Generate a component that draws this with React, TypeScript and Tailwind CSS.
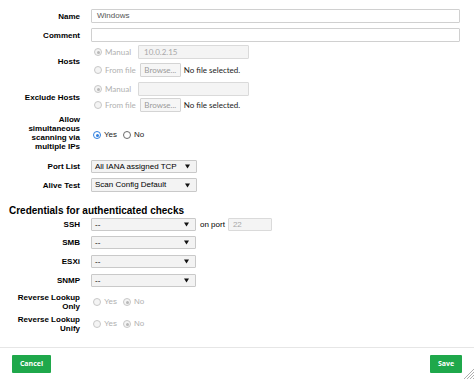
import type { ReactNode } from "react";

type RadioState = "on" | "off";

function Radio({ state, disabled }: { state: RadioState; disabled?: boolean }) {
  const ring = disabled
    ? "border-[#c8c8c8] bg-[#f4f4f4]"
    : state === "on"
      ? "border-[#2f7fe0] bg-white"
      : "border-[#6b6b6b] bg-white";
  const dot = disabled ? "bg-[#b8b8b8]" : "bg-[#2f7fe0]";
  return (
    <span className={`flex h-[8px] w-[8px] shrink-0 items-center justify-center rounded-full border ${ring}`}>
      {state === "on" && <span className={`h-[3px] w-[3px] rounded-full ${dot}`} />}
    </span>
  );
}

function Label({ children, className = "" }: { children: ReactNode; className?: string }) {
  return (
    <div className={`w-[80px] shrink-0 text-right font-bold leading-[9px] ${className}`}>{children}</div>
  );
}

function Row({ label, children, className = "" }: { label: ReactNode; children: ReactNode; className?: string }) {
  return (
    <div className={`flex items-center ${className}`}>
      <Label>{label}</Label>
      <div className="ml-[11px] flex items-center">{children}</div>
    </div>
  );
}

function Select({ value, width = "w-[106px]" }: { value: string; width?: string }) {
  return (
    <div
      className={`flex h-full ${width} items-center justify-between rounded-[1px] border border-[#c9c9c9] bg-[#f3f3f3] pl-[3px] pr-[6px]`}
    >
      <span>{value}</span>
      <svg width="5" height="5" viewBox="0 0 5 5">
        <path d="M0 0.5 L5 0.5 L2.5 4.5 Z" fill="#111" />
      </svg>
    </div>
  );
}

function FileRow() {
  return (
    <div className="flex h-[14px] items-center font-['Lato','Open_Sans',sans-serif]">
      <span className="ml-[3px]">
        <Radio state="off" disabled />
      </span>
      <span className="ml-[3px] text-[#b0b0b0]">From file</span>
      <span className="ml-[4px] flex h-[14px] w-[41px] items-center justify-center rounded-[1px] border border-[#d4d4d4] bg-[#f6f6f6] text-[#9a9a9a]">
        Browse...
      </span>
      <span className="ml-[3px] text-[#222]">No file selected.</span>
    </div>
  );
}

function ManualRow({ value }: { value: string }) {
  return (
    <div className="flex h-[14px] items-center font-['Lato','Open_Sans',sans-serif]">
      <span className="ml-[3px]">
        <Radio state="on" disabled />
      </span>
      <span className="ml-[3px] w-[33px] text-[#b0b0b0]">Manual</span>
      <span className="flex h-[14px] w-[111px] items-center rounded-[1px] border border-[#dadada] bg-[#f4f4f4] pl-[5px] text-[#a8a8a8]">
        {value}
      </span>
    </div>
  );
}

function YesNo({ yes, disabled }: { yes: boolean; disabled?: boolean }) {
  const txt = disabled ? "text-[#b0b0b0]" : "text-[#222]";
  return (
    <div className="flex items-center">
      <span className="ml-[2px]">
        <Radio state={yes ? "on" : "off"} disabled={disabled} />
      </span>
      <span className={`ml-[3px] ${txt}`}>Yes</span>
      <span className="ml-[6px]">
        <Radio state={yes ? "off" : "on"} disabled={disabled} />
      </span>
      <span className={`ml-[3px] ${txt}`}>No</span>
    </div>
  );
}

export default function App() {
  return (
    <div className="relative h-[379px] w-[474px] overflow-hidden bg-white font-['Liberation_Sans',Arial,sans-serif] text-[8px] text-black">
      <div className="pt-[9px]">
        <Row label="Name" className="h-[14px]">
          <div className="flex h-[14px] w-[369px] items-center rounded-[1px] border border-[#d0d0d0] pl-[5px] text-[#555]">
            Windows
          </div>
        </Row>
        <Row label="Comment" className="mt-[5px] h-[14px]">
          <div className="h-[14px] w-[369px] rounded-[1px] border border-[#d0d0d0]" />
        </Row>

        <div className="mt-[3px] flex items-center">
          <Label>Hosts</Label>
          <div className="ml-[11px] flex flex-col gap-[4px]">
            <ManualRow value="10.0.2.15" />
            <FileRow />
          </div>
        </div>

        <div className="mt-[5px] flex items-center">
          <Label>Exclude Hosts</Label>
          <div className="ml-[11px] flex flex-col gap-[2px]">
            <ManualRow value="" />
            <FileRow />
          </div>
        </div>

        <div className="mt-[3px] flex items-center">
          <Label>
            Allow
            <br />
            simultaneous
            <br />
            scanning via
            <br />
            multiple IPs
          </Label>
          <div className="ml-[11px] mt-[4px]">
            <YesNo yes />
          </div>
        </div>

        <Row label="Port List" className="mt-[9px] h-[13px]">
          <div className="h-[13px]">
            <Select value="All IANA assigned TCP" />
          </div>
        </Row>
        <Row label="Alive Test" className="mt-[5px] h-[14px]">
          <div className="h-[14px]">
            <Select value="Scan Config Default" />
          </div>
        </Row>

        <div className="mt-[13px] pl-[9px] text-[10px] font-bold leading-[12px]">
          Credentials for authenticated checks
        </div>

        <Row label="SSH" className="mt-[1px] h-[13px]">
          <div className="h-[13px]">
            <Select value="--" width="w-[105px]" />
          </div>
          <span className="ml-[4px]">on port</span>
          <span className="ml-[3px] flex h-[13px] w-[44px] items-center rounded-[1px] border border-[#dadada] bg-[#f4f4f4] pl-[4px] text-[#a8a8a8]">
            22
          </span>
        </Row>
        <Row label="SMB" className="mt-[5px] h-[13px]">
          <div className="h-[13px]">
            <Select value="--" width="w-[105px]" />
          </div>
        </Row>
        <Row label="ESXi" className="mt-[6px] h-[13px]">
          <div className="h-[13px]">
            <Select value="--" width="w-[105px]" />
          </div>
        </Row>
        <Row label="SNMP" className="mt-[6px] h-[13px]">
          <div className="h-[13px]">
            <Select value="--" width="w-[105px]" />
          </div>
        </Row>

        <Row
          label={
            <>
              Reverse Lookup
              <br />
              Only
            </>
          }
          className="mt-[6px] h-[18px]"
        >
          <YesNo yes={false} disabled />
        </Row>
        <Row
          label={
            <>
              Reverse Lookup
              <br />
              Unify
            </>
          }
          className="mt-[4px] h-[18px]"
        >
          <YesNo yes={false} disabled />
        </Row>

        <div className="mt-[14px] border-t border-[#e6e6e6]" />
        <div className="mt-[7px] flex justify-between px-[12px] font-['Open_Sans','Lato',sans-serif] text-[7px] font-bold text-white">
          <button className="flex h-[18px] w-[39px] items-center justify-center rounded-[1px] bg-[#1fa84b]">
            Cancel
          </button>
          <button className="flex h-[18px] w-[32px] items-center justify-center rounded-[1px] bg-[#1fa84b]">
            Save
          </button>
        </div>
      </div>

      <svg className="absolute bottom-0 right-0" width="12" height="12" viewBox="0 0 12 12">
        <path d="M12 2 L2 12 M12 5 L5 12 M12 8 L8 12 M12 11 L11 12" stroke="#9a9a9a" strokeWidth="0.8" />
      </svg>
    </div>
  );
}
